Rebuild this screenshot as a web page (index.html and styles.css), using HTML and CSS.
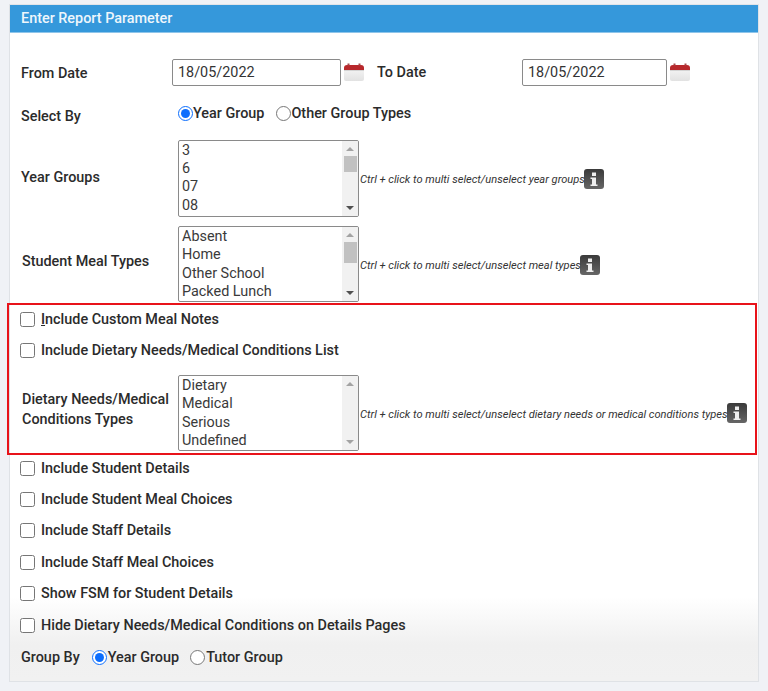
FILE: index.html
```html
<!DOCTYPE html>
<html lang="en">
<head>
<meta charset="utf-8">
<title>Enter Report Parameter</title>
<link rel="stylesheet" href="styles.css">
</head>
<body>
<svg class="defs" width="0" height="0" aria-hidden="true">
  <defs>
    <linearGradient id="infoG" x1="0" y1="0" x2="0" y2="1"><stop offset="0" stop-color="#3a3a3a"/><stop offset="1" stop-color="#666"/></linearGradient>
    <linearGradient id="calB" x1="0" y1="0" x2="0" y2="1"><stop offset="0" stop-color="#f8f8f8"/><stop offset="1" stop-color="#e2e2e2"/></linearGradient>
    <symbol id="cal" viewBox="0 0 22 20">
      <rect x="1" y="4" width="20" height="15" rx="2" fill="url(#calB)"/>
      <path d="M1 8V6q0-3 3-3h14q3 0 3 3v2z" fill="#b8282c"/>
      <rect x="1" y="8" width="20" height="1" fill="#d4d4d4"/>
      <rect x="4.500" y="1.500" width="2" height="2" fill="#a8484a"/>
      <rect x="15.500" y="1.500" width="2" height="2" fill="#a8484a"/>
    </symbol>
    <symbol id="info" viewBox="0 0 20 20">
      <rect width="20" height="20" rx="3" fill="url(#infoG)"/>
      <rect x="8" y="3.5" width="4" height="3.5" fill="#eee"/>
      <path d="M6.5 8.5H12v7h1.5V17h-7v-1.500H8V10H6.500z" fill="#eee"/>
    </symbol>
  </defs>
</svg>
<main class="panel">
  <h1 class="panel-head">Enter Report Parameter</h1>
  <form class="panel-body">
    <div class="row row-date">
      <label class="lbl lbl-from">From Date</label>
      <input class="date date-from" type="text" value="18/05/2022">
      <svg class="cal"><use href="#cal"/></svg>
      <label class="lbl lbl-to">To Date</label>
      <input class="date date-to" type="text" value="18/05/2022">
      <svg class="cal"><use href="#cal"/></svg>
    </div>
    <div class="row row-select">
      <label class="lbl lbl-by">Select By</label>
      <div class="radios">
        <label class="radio"><input type="radio" name="by" checked>Year Group</label>
        <label class="radio"><input type="radio" name="by">Other Group Types</label>
      </div>
    </div>
    <div class="row row-list row-year">
      <label class="lbl lbl-list">Year Groups</label>
      <div class="list">
        <div class="opts"><div>3</div><div>6</div><div>07</div><div>08</div></div>
        <div class="bar"><span class="up"></span><span class="thumb thumb-a"></span><span class="down"></span></div>
      </div>
      <span class="hint">Ctrl + click to multi select/unselect year groups</span>
      <svg class="info"><use href="#info"/></svg>
    </div>
    <div class="row row-list row-meal">
      <label class="lbl lbl-list lbl-meal">Student Meal Types</label>
      <div class="list">
        <div class="opts"><div>Absent</div><div>Home</div><div>Other School</div><div>Packed Lunch</div></div>
        <div class="bar"><span class="up"></span><span class="thumb thumb-b"></span><span class="down"></span></div>
      </div>
      <span class="hint">Ctrl + click to multi select/unselect meal types</span>
      <svg class="info"><use href="#info"/></svg>
    </div>
    <section class="redbox">
      <label class="check check-first"><input type="checkbox"><span><u>I</u>nclude Custom Meal Notes</span></label>
      <label class="check check-second"><input type="checkbox">Include Dietary Needs/Medical Conditions List</label>
      <div class="row row-list row-diet">
        <label class="lbl lbl-list lbl-diet">Dietary Needs/Medical<br>Conditions Types</label>
        <div class="list">
          <div class="opts"><div>Dietary</div><div>Medical</div><div>Serious</div><div>Undefined</div></div>
          <div class="bar bar-off"><span class="up"></span><span class="fill"></span><span class="down"></span></div>
        </div>
        <span class="hint">Ctrl + click to multi select/unselect dietary needs or medical conditions types</span>
        <svg class="info"><use href="#info"/></svg>
      </div>
    </section>
    <div class="checks">
      <label class="check"><input type="checkbox">Include Student Details</label>
      <label class="check"><input type="checkbox">Include Student Meal Choices</label>
      <label class="check"><input type="checkbox">Include Staff Details</label>
      <label class="check"><input type="checkbox">Include Staff Meal Choices</label>
      <label class="check"><input type="checkbox">Show FSM for Student Details</label>
      <label class="check"><input type="checkbox">Hide Dietary Needs/Medical Conditions on Details Pages</label>
    </div>
    <div class="row row-group">
      <label class="lbl lbl-group">Group By</label>
      <div class="radios">
        <label class="radio"><input type="radio" name="group" checked>Year Group</label>
        <label class="radio"><input type="radio" name="group">Tutor Group</label>
      </div>
    </div>
  </form>
</main>
</body>
</html>
```
FILE: styles.css
```css
* { box-sizing: border-box; }
html, body { margin: 0; height: 691px; overflow: hidden; }
body {
  background: #f0f2f6;
  font-family: Roboto, "Liberation Sans", sans-serif;
  font-size: 14.4px;
  color: #2b2b2b;
  padding: 4px 9px 0;
}
.defs { position: absolute; }
.panel {
  width: 750px;
  height: 678px;
  border: 1px solid #dfe2e6;
  border-top-color: #e2e4e8;
  background: linear-gradient(#fff 0, #fff 592px, #f0f0f0 640px, #f1f1f1 100%);
}
.panel-head {
  margin: 0;
  height: 28px;
  line-height: 27px;
  padding-left: 11px;
  background: #3598db;
  border-bottom: 1px solid #8fc5ea;
  color: #eef6fc;
  font-size: 14.4px;
  font-weight: 500;
}
.panel-body { padding: 26px 0 0 11px; }
.row { display: flex; align-items: center; }
.lbl { font-weight: 500; white-space: nowrap; }

.row-date { height: 27px; }
.lbl-from { width: 151px; position: relative; top: 1px; }
.date {
  height: 27px;
  border: 1px solid #8a8a8a;
  border-radius: 2px;
  padding: 0 4px 0 5px;
  font: 400 14.4px Roboto, sans-serif;
  color: #333;
  background: #fff;
}
.date-from { width: 169px; }
.date-to { width: 145px; }
.cal { width: 22px; height: 20px; margin-left: 2px; margin-top: -2px; flex: none; }
.lbl-to { width: 145px; margin-left: 12px; }

.row-select { margin-top: 18px; height: 18px; }
.lbl-by { width: 157px; position: relative; top: 3px; }
.radios { display: flex; gap: 11px; }
.radio { display: flex; align-items: center; font-weight: 500; white-space: nowrap; }
.radio input { width: 15px; height: 15px; margin: 0 1px 0 0; accent-color: #0d6efd; }
.row-select .radios { gap: 12px; }
.row-select .radio input { margin-right: 0; }

.row-list { height: 77px; }
.row-year { margin-top: 18px; }
.row-year .lbl-list { position: relative; top: -1px; }
.row-meal { margin-top: 9px; height: 76px; }
.lbl-list { width: 157px; }
.lbl-meal { padding-left: 1px; position: relative; top: -3px; }
.list {
  width: 181px;
  height: 100%;
  border: 1px solid #8a8a8a;
  border-radius: 2px;
  background: #fff;
  display: flex;
  flex: none;
  overflow: hidden;
}
.opts { flex: 1; padding: 1px 0 0 3px; line-height: 18.2px; font-weight: 400; color: #3a3a3a; }
.row-meal .opts, .row-diet .opts { line-height: 18.45px; }
.bar { width: 16px; background: #f1f1f1; display: flex; flex-direction: column; align-items: center; }
.up, .down { width: 0; height: 0; border-left: 4px solid transparent; border-right: 4px solid transparent; flex: none; }
.up { border-bottom: 4px solid #a3a3a3; margin-top: 6px; }
.down { border-top: 4px solid #505050; margin-bottom: 6px; }
.bar-off .down { border-top-color: #a3a3a3; }
.thumb { width: 13px; background: #c1c1c1; flex: none; margin-top: 5px; }
.thumb-a { height: 16px; }
.thumb-b { height: 21px; }
.fill { flex: 1; }
.bar .down { margin-top: auto; }
.hint { font-size: 11.1px; font-style: italic; color: #333; white-space: nowrap; position: relative; top: 1px; margin: 0 -1px 0 1px; }
.info { width: 20px; height: 20px; flex: none; }
.row-meal .info { margin-top: 1px; }

.redbox {
  margin: 1px 0 0 -14px;
  width: 750px;
  height: 152px;
  border: 2px solid #e8131a;
  padding-left: 12px;
  display: flow-root;
}
.check { display: flex; align-items: center; font-weight: 500; height: 18px; white-space: nowrap; }
.check input { width: 15px; height: 15px; margin: 0 6px 0 -1px; accent-color: #0d6efd; flex: none; }
.check-first { margin-top: 5px; }
.check-second { margin-top: 13px; }
.row-diet { margin-top: 16px; height: 76px; }
.lbl-diet { line-height: 20px; padding-left: 1px; position: relative; top: -3px; }

.checks { display: flex; flex-direction: column; gap: 13.35px; margin-top: 4.3px; }
.row-group { margin-top: 14.7px; height: 18px; }
.lbl-group { margin-right: 12px; }
```
